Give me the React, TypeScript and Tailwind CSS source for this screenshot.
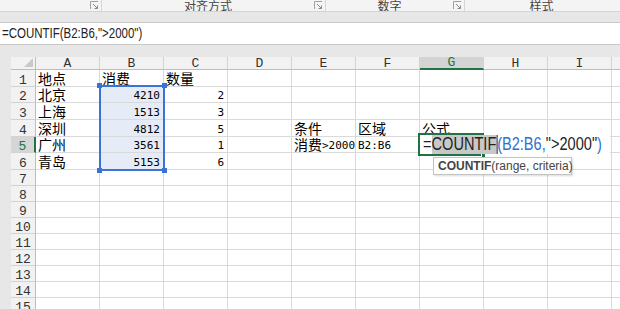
import React from 'react';

const COLS = ['A', 'B', 'C', 'D', 'E', 'F', 'G', 'H', 'I', 'J'];

const cjk = "font-['Noto_Sans_CJK_SC',sans-serif] text-[14px] leading-[15px] text-black";
const num = "font-['DejaVu_Sans_Mono',monospace] text-[11px] leading-[13px] text-black";
const hdr = "font-['Liberation_Mono',monospace] text-[13px] leading-[11px]";
const sans = "font-['Liberation_Sans',sans-serif]";

type CellVal = { node: React.ReactNode; right?: boolean };

const T = (s: string) => <span className={cjk}>{s}</span>;
const N = (s: string) => <span className={num}>{s}</span>;

const ROWS: { h: string; cells: Record<string, CellVal> }[] = [
  { h: 'h-[17px]', cells: { A: { node: T('地点') }, B: { node: T('消费') }, C: { node: T('数量') } } },
  { h: 'h-[16px]', cells: { A: { node: T('北京') }, B: { node: N('4210'), right: true }, C: { node: N('2'), right: true } } },
  { h: 'h-[17px]', cells: { A: { node: T('上海') }, B: { node: N('1513'), right: true }, C: { node: N('3'), right: true } } },
  {
    h: 'h-[17px]',
    cells: {
      A: { node: T('深圳') },
      B: { node: N('4812'), right: true },
      C: { node: N('5'), right: true },
      E: { node: T('条件') },
      F: { node: T('区域') },
      G: { node: T('公式') },
    },
  },
  {
    h: 'h-[16px]',
    cells: {
      A: { node: T('广州') },
      B: { node: N('3561'), right: true },
      C: { node: N('1'), right: true },
      E: { node: <>{T('消费')}{N('>2000')}</> },
      F: { node: N('B2:B6') },
    },
  },
  { h: 'h-[17px]', cells: { A: { node: T('青岛') }, B: { node: N('5153'), right: true }, C: { node: N('6'), right: true } } },
  ...Array.from({ length: 9 }, () => ({ h: 'h-[16px]', cells: {} })),
];

// little "dialog launcher" glyph in the ribbon group corner
const Launcher = () => (
  <svg width="9" height="9" viewBox="0 0 9 9" className="shrink-0 mb-[1px]">
    <path d="M0.5 8V0.5H8" fill="none" stroke="#a0a0a0" strokeWidth="1" />
    <path d="M3 3L7.5 7.5M7.5 4.5V7.5H4.5" fill="none" stroke="#8a8a8a" strokeWidth="1" />
  </svg>
);

const RibbonGroup = ({ label, w, last }: { label?: string; w: string; last?: boolean }) => (
  <div className={`${w} shrink-0 flex items-end ${last ? '' : 'border-r border-[#d6d6d6]'} pr-[2px]`}>
    <div className="flex-1 flex justify-center">
      {label && (
        <span className="font-['Noto_Sans_CJK_SC',sans-serif] text-[12px] leading-[12px] text-[#444] -mb-[1px]">
          {label}
        </span>
      )}
    </div>
    {!last && <Launcher />}
  </div>
);

export default function App() {
  return (
    <div className="w-[620px] h-[309px] overflow-hidden bg-[#e7e7e7] flex flex-col">
      {/* Ribbon group labels (cut off) */}
      <div className="h-[12px] shrink-0 bg-[#f4f4f4] border-b border-[#d4d4d4] flex overflow-hidden">
        <RibbonGroup w="w-[102px]" />
        <RibbonGroup w="w-[224px]" label="对齐方式" />
        <RibbonGroup w="w-[139px]" label="数字" />
        <RibbonGroup w="flex-1" label="样式" last />
      </div>

      <div className="h-[10px] shrink-0" />

      {/* Formula bar */}
      <div className="h-[23px] shrink-0 bg-white border-y border-[#c9c9c9] flex items-center px-[2px]">
        <span className={`${sans} inline-block text-[14px] text-[#222] whitespace-nowrap origin-left scale-x-[0.82]`}>
          =COUNTIF(B2:B6,"&gt;2000")
        </span>
      </div>

      <div className="h-[12px] shrink-0" />

      {/* Sheet */}
      <div className="flex-1 min-h-0 flex">
        <div className="w-[11px] shrink-0" />
        <div className="relative flex-1 overflow-hidden bg-white">
          {/* column headers */}
          <div className="flex h-[13px]">
            <div className="relative w-[25px] shrink-0 bg-[#f2f2f2] border-r border-b border-[#bdbdbd]">
              <svg width="9" height="9" viewBox="0 0 9 9" className="absolute right-[2px] bottom-[2px]">
                <polygon points="9,0 9,9 0,9" fill="#c9c9c9" />
              </svg>
            </div>
            {COLS.map((c) => (
              <div
                key={c}
                className={`w-[64px] shrink-0 flex items-end justify-center border-r border-[#d2d2d2] ${hdr} ${
                  c === 'G'
                    ? 'bg-[#d4d4d4] text-[#217346] border-b-2 border-b-[#217346]'
                    : 'bg-[#f2f2f2] text-[#333] border-b border-b-[#bdbdbd]'
                }`}
              >
                {c}
              </div>
            ))}
          </div>

          {/* rows */}
          {ROWS.map((r, i) => {
            const n = i + 1;
            const active = n === 5;
            return (
              <div key={n} className={`flex ${r.h}`}>
                <div
                  className={`w-[25px] shrink-0 flex items-end justify-center border-b border-[#d2d2d2] ${hdr} ${
                    active
                      ? 'bg-[#d6d6d6] text-[#217346] border-r-2 border-r-[#217346]'
                      : 'bg-[#f2f2f2] text-[#333] border-r border-r-[#bdbdbd]'
                  }`}
                >
                  {n}
                </div>
                {COLS.map((c) => {
                  const v = r.cells[c];
                  const sel = c === 'B' && n >= 2 && n <= 6;
                  return (
                    <div
                      key={c}
                      className={`w-[64px] shrink-0 flex items-end whitespace-nowrap border-r border-b border-[#dadada] ${
                        v?.right ? 'justify-end pr-[3px]' : 'pl-[2px]'
                      } ${sel ? 'bg-[#e5ecf7]' : ''}`}
                    >
                      {v?.node}
                    </div>
                  );
                })}
              </div>
            );
          })}

          {/* formula range highlight B2:B6 */}
          <div className="absolute left-[88px] top-[28px] w-[66px] h-[86px] border-2 border-[#3a72d6] pointer-events-none">
            <div className="absolute -left-[4px] -top-[4px] w-[5px] h-[5px] bg-[#3a72d6]" />
            <div className="absolute -right-[4px] -top-[4px] w-[5px] h-[5px] bg-[#3a72d6]" />
            <div className="absolute -left-[4px] -bottom-[4px] w-[5px] h-[5px] bg-[#3a72d6]" />
            <div className="absolute -right-[4px] -bottom-[4px] w-[5px] h-[5px] bg-[#3a72d6]" />
          </div>

          {/* active cell G5 border, drawn under the editor */}
          <div className="absolute left-[407px] top-[76px] w-[66px] h-[23px] border-2 border-[#217346] pointer-events-none">
            <div className="absolute -right-[4px] -bottom-[4px] w-[5px] h-[5px] bg-[#217346] border border-white" />
          </div>

          {/* in-cell editor for G5 */}
          <div className="absolute left-[409px] top-[78px] w-[190px] h-[19px] bg-white flex items-center pl-[3px]">
            <span
              className={`${sans} text-[18px] leading-[19px] text-[#222] whitespace-nowrap flex items-center origin-left scale-x-[0.81]`}
            >
              =<span className="bg-[#c8c8c8]">COUNTIF</span>
              <span className="w-[1px] h-[19px] bg-black" />
              <span className="text-[#2f6fd1]">(B2:B6,</span>"&gt;2000"
              <span className="text-[#2f6fd1]">)</span>
            </span>
          </div>

          {/* function argument tooltip */}
          <div className="absolute left-[422px] top-[100px] w-[139px] h-[18px] bg-white border border-[#c3c3c3] shadow-[1px_1px_2px_rgba(0,0,0,0.15)] flex items-center pl-[4px]">
            <span className={`${sans} text-[12px] text-[#444] whitespace-nowrap`}>
              <b>COUNTIF</b>(range, criteria)
            </span>
          </div>
        </div>
      </div>
    </div>
  );
}
